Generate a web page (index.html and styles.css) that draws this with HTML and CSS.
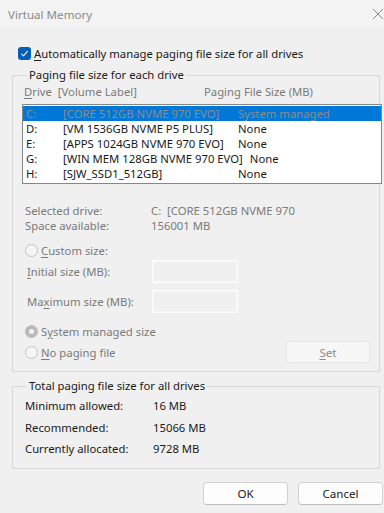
FILE: index.html
```html
<!DOCTYPE html>
<html lang="en">
<head>
    <meta charset="UTF-8">
    <title>Virtual Memory</title>
    <link rel="stylesheet" href="styles.css">
</head>
<body>
    <div class="titlebar">
        <span class="title">Virtual Memory</span>
        <svg class="close" width="12" height="12" viewBox="0 0 12 12">
            <path d="M1 1 L11 11 M11 1 L1 11" stroke="#8a8a8a" stroke-width="1" fill="none"/>
        </svg>
    </div>

    <div class="dialog">
        <div class="auto">
            <span class="check">
                <svg width="9" height="9" viewBox="0 0 9 9"><path d="M1.5 4.8 L3.6 6.8 L7.6 2.2" stroke="#fff" stroke-width="1.1" fill="none"/></svg>
            </span>
            <span><u>A</u>utomatically manage paging file size for all drives</span>
        </div>

        <fieldset class="group">
            <legend>Paging file size for each drive</legend>
            <div class="head">
                <span class="head-drive"><u>D</u>rive&nbsp; [Volume Label]</span>
                <span>Paging File Size (MB)</span>
            </div>
            <div class="list">
                <div class="row selected"><span class="letter">C:</span><span class="label">[CORE 512GB NVME 970 EVO]</span><span>System managed</span></div>
                <div class="row"><span class="letter">D:</span><span class="label">[VM 1536GB NVME P5 PLUS]</span><span>None</span></div>
                <div class="row"><span class="letter">E:</span><span class="label">[APPS 1024GB NVME 970 EVO]</span><span>None</span></div>
                <div class="row"><span class="letter">G:</span><span class="label">[WIN MEM 128GB NVME 970 EVO]</span><span>None</span></div>
                <div class="row"><span class="letter">H:</span><span class="label">[SJW_SSD1_512GB]</span><span>None</span></div>
            </div>

            <div class="info">
                <div class="line"><span class="key">Selected drive:</span><span>C:&nbsp; [CORE 512GB NVME 970</span></div>
                <div class="line"><span class="key">Space available:</span><span>156001 MB</span></div>
            </div>

            <div class="option custom"><span class="radio"></span><span><u>C</u>ustom size:</span></div>
            <div class="field first"><span class="field-label"><u>I</u>nitial size (MB):</span><span class="box"></span></div>
            <div class="field"><span class="field-label">Ma<u>x</u>imum size (MB):</span><span class="box"></span></div>

            <div class="option managed"><span class="radio on"></span><span>S<u>y</u>stem managed size</span></div>
            <div class="option-row">
                <div class="option"><span class="radio"></span><span><u>N</u>o paging file</span></div>
                <button class="btn set" disabled><u>S</u>et</button>
            </div>
        </fieldset>

        <fieldset class="group total">
            <legend>Total paging file size for all drives</legend>
            <div class="stat"><span class="key">Minimum allowed:</span><span>16 MB</span></div>
            <div class="stat"><span class="key">Recommended:</span><span>15066 MB</span></div>
            <div class="stat"><span class="key">Currently allocated:</span><span>9728 MB</span></div>
        </fieldset>

        <div class="actions">
            <button class="btn">OK</button>
            <button class="btn">Cancel</button>
        </div>
    </div>
</body>
</html>
```

FILE: styles.css
```css
*{
    box-sizing: border-box;
}

body{
    margin: 0;
    background: #f0f0f0;
    color: #1a1a1a;
    font-family: "Noto Sans", "Open Sans", sans-serif;
    font-size: 11.3px;
    line-height: 15px;
    width: 384px;
    height: 513px;
    overflow: hidden;
}

u{
    text-decoration-thickness: 1px;
    text-underline-offset: 2px;
}

.titlebar{
    height: 28px;
    background: #f3f3f3;
    display: flex;
    align-items: center;
    justify-content: space-between;
    padding: 0 0 0 8px;
}

.title{
    color: #8a8a8a;
    font-size: 11.6px;
}

.dialog{
    padding: 0 4px 0 12px;
}

.auto{
    display: flex;
    align-items: center;
    height: 16px;
    margin-top: 17px;
    padding-left: 6px;
}

.check{
    width: 13px;
    height: 13px;
    border-radius: 3px;
    background: #005fb8;
    display: flex;
    align-items: center;
    justify-content: center;
    margin-right: 3px;
}

.group{
    margin: 6px 0 0 0;
    padding: 0 0 8px 9px;
    border: 1px solid #d9d9d9;
    min-width: 0;
}

.group legend{
    margin-left: 5px;
    padding: 0 2px;
    line-height: 16px;
}

.head{
    display: flex;
    height: 15px;
    margin-top: 1px;
    padding-left: 2px;
    color: #7a7a7a;
}

.head-drive{
    width: 180px;
}

.list{
    margin: 5px -3px 0 0;
    border: 1px solid #828790;
    background: #fff;
    padding: 1px 0 2px 0;
    color: #1a1a1a;
}

.row{
    display: flex;
    height: 15px;
    padding-left: 3px;
    white-space: nowrap;
}

.row.selected{
    background: #0078d7;
    color: #8c8c8c;
}

.letter{
    width: 37px;
}

.label{
    min-width: 175px;
    padding-right: 7px;
}

.info{
    margin-top: 19px;
    color: #7a7a7a;
}

.line{
    display: flex;
    height: 15px;
    padding-left: 3px;
}

.line .key{
    width: 126px;
}

.option{
    display: flex;
    align-items: center;
    height: 16px;
    padding-left: 3px;
    color: #7a7a7a;
}

.option.custom{
    margin-top: 9px;
}

.option.managed{
    margin-top: 10px;
}

.radio{
    width: 13px;
    height: 13px;
    border-radius: 50%;
    border: 1px solid #c4c4c4;
    background: #f5f5f5;
    margin-right: 3px;
    display: flex;
    align-items: center;
    justify-content: center;
}

.radio.on{
    background: #b9b9b9;
    border-color: #b9b9b9;
}

.radio.on::after{
    content: "";
    width: 5px;
    height: 5px;
    border-radius: 50%;
    background: #f3f3f3;
}

.field{
    display: flex;
    align-items: center;
    height: 23px;
    margin-top: 7px;
    padding-left: 5px;
    color: #7a7a7a;
}

.field.first{
    margin-top: 2px;
}

.field-label{
    width: 125px;
}

.box{
    width: 86px;
    height: 23px;
    border: 1px solid #fbfbfb;
    box-shadow: inset 0 0 0 1px #f6f6f6;
}

.option-row{
    display: flex;
    align-items: center;
    justify-content: space-between;
    height: 22px;
    margin-top: 2px;
    padding-right: 9px;
}

.btn{
    font-family: inherit;
    font-size: 11.6px;
    color: #1a1a1a;
    width: 85px;
    height: 23px;
    border: 1px solid #d1d1d1;
    border-bottom-color: #bdbdbd;
    border-radius: 4px;
    background: #fdfdfd;
    padding: 0;
}

.btn.set{
    width: 84px;
    height: 22px;
    color: #8a8a8a;
    background: #f7f7f7;
    border-color: #e6e6e6;
}

.total{
    padding-bottom: 8px;
}

.stat{
    display: flex;
    align-items: center;
    height: 21.5px;
    padding-left: 3px;
}

.stat:first-of-type{
    margin-top: 1px;
}

.stat .key{
    width: 128px;
}

.actions{
    display: flex;
    justify-content: flex-end;
    gap: 10px;
    margin: 13px -3px 0 0;
}
```
